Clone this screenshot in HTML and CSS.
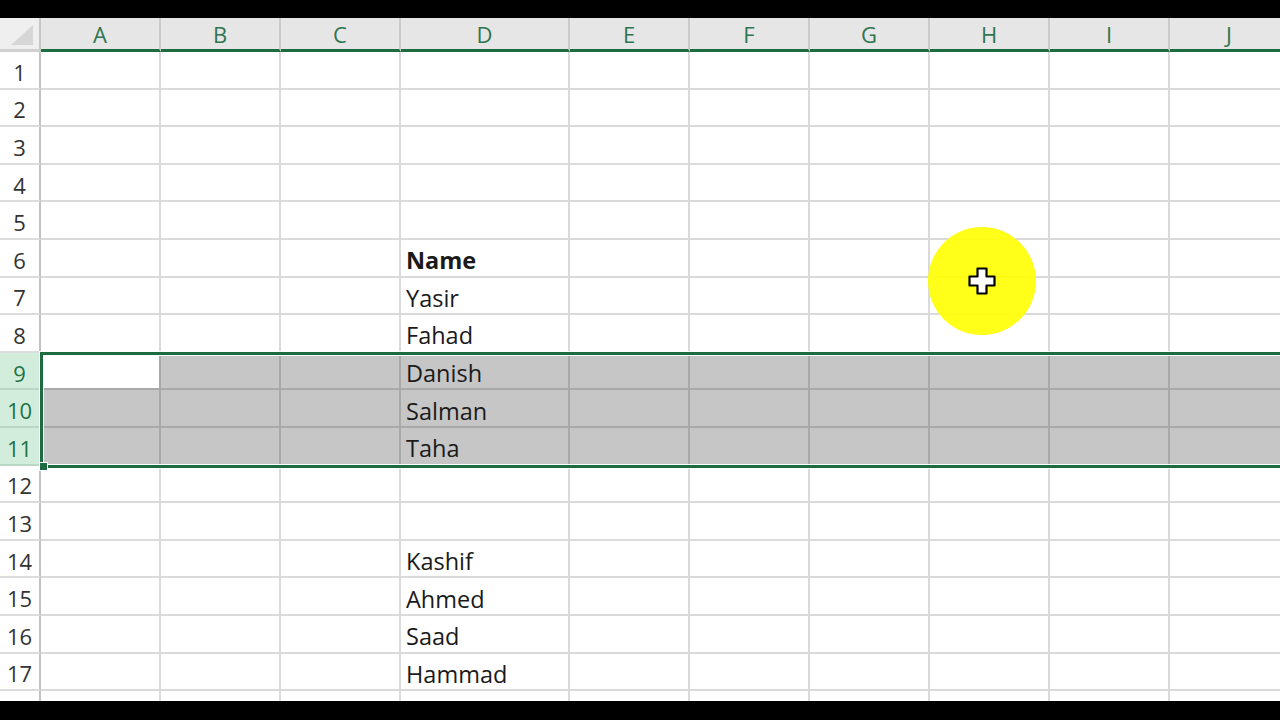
FILE: index.html
```html
<!DOCTYPE html>
<html lang="en">
<head>
  <meta charset="UTF-8">
  <meta name="viewport" content="width=device-width, initial-scale=1.0">
  <title>Sheet1 - Excel</title>
  <link rel="stylesheet" href="styles.css">
</head>
<body>
  <div class="screen">
    <div class="sheet">
      <div class="row head">
        <div class="corner"><span class="tri"></span></div>
        <div class="ch">A</div><div class="ch">B</div><div class="ch">C</div><div class="ch">D</div><div class="ch">E</div>
        <div class="ch">F</div><div class="ch">G</div><div class="ch">H</div><div class="ch">I</div><div class="ch">J</div>
      </div>

      <div class="row"><div class="rh">1</div><div class="c"></div><div class="c"></div><div class="c"></div><div class="c"></div><div class="c"></div><div class="c"></div><div class="c"></div><div class="c"></div><div class="c"></div><div class="c"></div></div>
      <div class="row"><div class="rh">2</div><div class="c"></div><div class="c"></div><div class="c"></div><div class="c"></div><div class="c"></div><div class="c"></div><div class="c"></div><div class="c"></div><div class="c"></div><div class="c"></div></div>
      <div class="row"><div class="rh">3</div><div class="c"></div><div class="c"></div><div class="c"></div><div class="c"></div><div class="c"></div><div class="c"></div><div class="c"></div><div class="c"></div><div class="c"></div><div class="c"></div></div>
      <div class="row"><div class="rh">4</div><div class="c"></div><div class="c"></div><div class="c"></div><div class="c"></div><div class="c"></div><div class="c"></div><div class="c"></div><div class="c"></div><div class="c"></div><div class="c"></div></div>
      <div class="row"><div class="rh">5</div><div class="c"></div><div class="c"></div><div class="c"></div><div class="c"></div><div class="c"></div><div class="c"></div><div class="c"></div><div class="c"></div><div class="c"></div><div class="c"></div></div>
      <div class="row"><div class="rh">6</div><div class="c"></div><div class="c"></div><div class="c"></div><div class="c bold">Name</div><div class="c"></div><div class="c"></div><div class="c"></div><div class="c"></div><div class="c"></div><div class="c"></div></div>
      <div class="row"><div class="rh">7</div><div class="c"></div><div class="c"></div><div class="c"></div><div class="c">Yasir</div><div class="c"></div><div class="c"></div><div class="c"></div><div class="c"></div><div class="c"></div><div class="c"></div></div>
      <div class="row"><div class="rh">8</div><div class="c"></div><div class="c"></div><div class="c"></div><div class="c">Fahad</div><div class="c"></div><div class="c"></div><div class="c"></div><div class="c"></div><div class="c"></div><div class="c"></div></div>
      <div class="row sel"><div class="rh">9</div><div class="c active"></div><div class="c"></div><div class="c"></div><div class="c">Danish</div><div class="c"></div><div class="c"></div><div class="c"></div><div class="c"></div><div class="c"></div><div class="c"></div></div>
      <div class="row sel"><div class="rh">10</div><div class="c"></div><div class="c"></div><div class="c"></div><div class="c">Salman</div><div class="c"></div><div class="c"></div><div class="c"></div><div class="c"></div><div class="c"></div><div class="c"></div></div>
      <div class="row sel"><div class="rh">11</div><div class="c"></div><div class="c"></div><div class="c"></div><div class="c">Taha</div><div class="c"></div><div class="c"></div><div class="c"></div><div class="c"></div><div class="c"></div><div class="c"></div></div>
      <div class="row"><div class="rh">12</div><div class="c"></div><div class="c"></div><div class="c"></div><div class="c"></div><div class="c"></div><div class="c"></div><div class="c"></div><div class="c"></div><div class="c"></div><div class="c"></div></div>
      <div class="row"><div class="rh">13</div><div class="c"></div><div class="c"></div><div class="c"></div><div class="c"></div><div class="c"></div><div class="c"></div><div class="c"></div><div class="c"></div><div class="c"></div><div class="c"></div></div>
      <div class="row"><div class="rh">14</div><div class="c"></div><div class="c"></div><div class="c"></div><div class="c">Kashif</div><div class="c"></div><div class="c"></div><div class="c"></div><div class="c"></div><div class="c"></div><div class="c"></div></div>
      <div class="row"><div class="rh">15</div><div class="c"></div><div class="c"></div><div class="c"></div><div class="c">Ahmed</div><div class="c"></div><div class="c"></div><div class="c"></div><div class="c"></div><div class="c"></div><div class="c"></div></div>
      <div class="row"><div class="rh">16</div><div class="c"></div><div class="c"></div><div class="c"></div><div class="c">Saad</div><div class="c"></div><div class="c"></div><div class="c"></div><div class="c"></div><div class="c"></div><div class="c"></div></div>
      <div class="row"><div class="rh">17</div><div class="c"></div><div class="c"></div><div class="c"></div><div class="c">Hammad</div><div class="c"></div><div class="c"></div><div class="c"></div><div class="c"></div><div class="c"></div><div class="c"></div></div>
      <div class="row"><div class="rh"></div><div class="c"></div><div class="c"></div><div class="c"></div><div class="c"></div><div class="c"></div><div class="c"></div><div class="c"></div><div class="c"></div><div class="c"></div><div class="c"></div></div>

      <!-- selection outline around rows 9:11 -->
      <div class="sel-box"><span class="handle"></span></div>

      <!-- recording highlight + cell cursor -->
      <div class="spot">
        <svg width="28" height="28" viewBox="0 0 28 28">
          <polygon points="9.5,1.5 18.5,1.5 18.5,9.5 26.5,9.5 26.5,18.5 18.5,18.5 18.5,26.5 9.5,26.5 9.5,18.5 1.5,18.5 1.5,9.5 9.5,9.5" fill="#fff" stroke="#000" stroke-width="2.2" stroke-linejoin="round"/>
        </svg>
      </div>
    </div>
  </div>
</body>
</html>
```

FILE: styles.css
```css
* {
  box-sizing: border-box;
}
body {
  margin: 0;
  background-color: #000;
  height: 720px;
  overflow: hidden;
  font-family: "Open Sans", "Liberation Sans", sans-serif;
}
.screen {
  padding-top: 18px;
}
.sheet {
  position: relative;
  height: 683px;
  overflow: hidden;
  background-color: #fff;
}
.row {
  display: grid;
  grid-template-columns: 41px 120px 120px 120px 169px repeat(6, 120px);
  grid-template-rows: 100%;
  height: 37.6px;
  line-height: 26px;
}
.row.head {
  height: 34px;
  background-color: #e6e6e6;
}
.corner {
  position: relative;
  background-color: #efefef;
  border-right: 2px solid #c6c6c6;
  border-bottom: 3px solid #d0d0d0;
}
.tri {
  position: absolute;
  right: 6px;
  bottom: 4px;
  width: 22px;
  height: 20px;
  background-color: #d6d6d6;
  clip-path: polygon(100% 0, 100% 100%, 0 100%);
}
.ch {
  display: flex;
  align-items: center;
  justify-content: center;
  padding-top: 1px;
  font-size: 22px;
  color: #2e7550;
  border-right: 2px solid #cacaca;
  border-bottom: 3px solid #1d6b40;
}
.rh {
  display: flex;
  align-items: center;
  justify-content: center;
  padding-top: 4px;
  font-size: 22px;
  color: #333;
  background-color: #fff;
  border-right: 2px solid #c2c2c2;
  border-bottom: 2px solid #dcdcdc;
}
.c {
  display: flex;
  align-items: center;
  padding: 5px 0 0 5px;
  font-size: 23.5px;
  color: #1a1a1a;
  white-space: nowrap;
  border-right: 2px solid #dadada;
  border-bottom: 2px solid #dadada;
}
.c.bold {
  font-weight: 700;
}
.row.sel .rh {
  background-color: #d3eddd;
  color: #217346;
  border-bottom-color: #b9d7c4;
}
.row.sel .c {
  background-color: #c6c6c6;
  border-right-color: #a9a9a9;
  border-bottom-color: #a9a9a9;
}
.row.sel .c.active {
  background-color: #fff;
}
.sel-box {
  position: absolute;
  left: 40px;
  top: 334px;
  width: 1260px;
  height: 116px;
  border: 3px solid #1e6b41;
  box-shadow: 0 0 0 1px #fff, inset 0 0 0 1px #fff;
  pointer-events: none;
}
.handle {
  position: absolute;
  left: -4px;
  bottom: -6px;
  width: 9px;
  height: 9px;
  background-color: #1e6b41;
  border: 1px solid #fff;
}
.spot {
  position: absolute;
  left: 928px;
  top: 209px;
  width: 108px;
  height: 108px;
  border-radius: 50%;
  background-color: rgba(255, 255, 0, 0.9);
  display: flex;
  align-items: center;
  justify-content: center;
}
.spot svg {
  display: block;
}
```
